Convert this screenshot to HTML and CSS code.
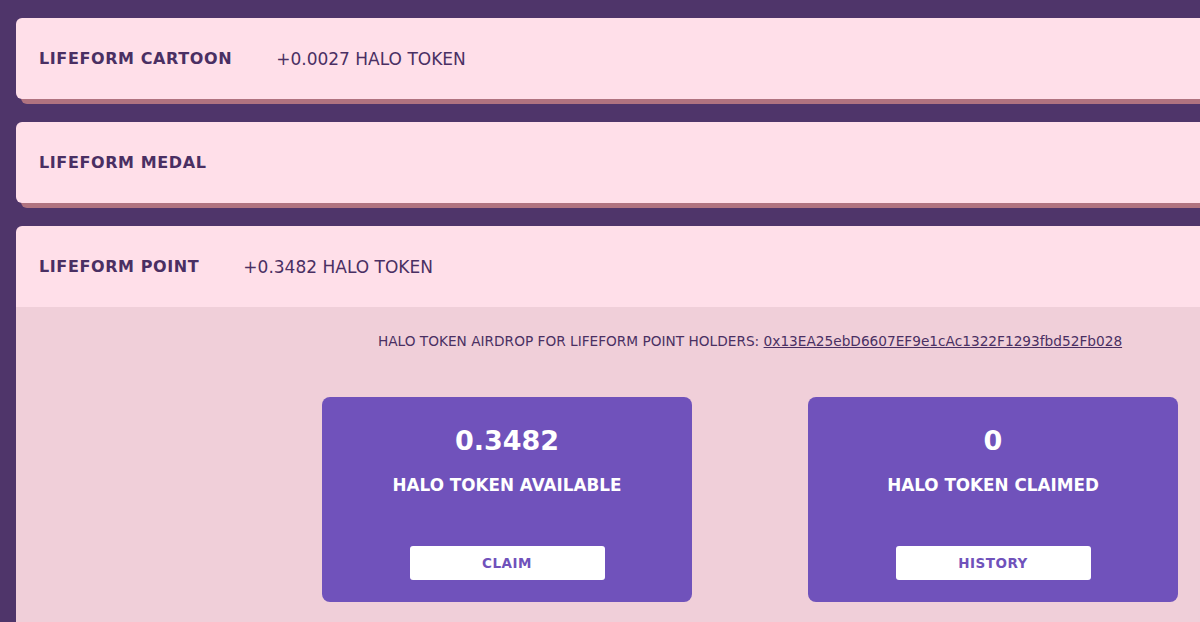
FILE: index.html
```html
<!DOCTYPE html>
<html lang="en">
<head>
    <meta charset="UTF-8">
    <meta name="viewport" content="width=device-width, initial-scale=1.0">
    <title>Lifeform Rewards</title>
    <link rel="stylesheet" href="styles.css">
</head>
<body>
    <div class="reward-list">
        <div class="reward-card">
            <div class="card-head">
                <span class="card-title">LIFEFORM CARTOON</span>
                <span class="card-amount">+0.0027 HALO TOKEN</span>
            </div>
        </div>

        <div class="reward-card">
            <div class="card-head">
                <span class="card-title">LIFEFORM MEDAL</span>
            </div>
        </div>

        <div class="reward-card open">
            <div class="card-head">
                <span class="card-title">LIFEFORM POINT</span>
                <span class="card-amount">+0.3482 HALO TOKEN</span>
            </div>
            <div class="card-body">
                <p class="airdrop">HALO TOKEN AIRDROP FOR LIFEFORM POINT HOLDERS: <a href="#">0x13EA25ebD6607EF9e1cAc1322F1293fbd52Fb028</a></p>
                <div class="stats">
                    <div class="stat-box">
                        <div class="stat-value">0.3482</div>
                        <div class="stat-label">HALO TOKEN AVAILABLE</div>
                        <button class="stat-btn">CLAIM</button>
                    </div>
                    <div class="stat-box">
                        <div class="stat-value">0</div>
                        <div class="stat-label">HALO TOKEN CLAIMED</div>
                        <button class="stat-btn">HISTORY</button>
                    </div>
                </div>
            </div>
        </div>
    </div>
</body>
</html>
```

FILE: styles.css
```css
body {
    font-family: "DejaVu Sans", Arial, sans-serif;
    margin: 0;
    padding: 0;
    background-color: #4f356a;
    color: #4a2f63;
    overflow: hidden;
}

.reward-list {
    display: flex;
    flex-direction: column;
    gap: 23px;
    padding: 18px 0 0 16px;
}

.reward-card {
    width: 1468px;
    background-color: #ffdfe9;
    border-radius: 6px;
    box-shadow: 5px 5px 0 #b07380;
    overflow: hidden;
}

.reward-card.open {
    box-shadow: none;
}

.card-head {
    display: flex;
    align-items: center;
    height: 81px;
    padding-left: 23px;
}

.card-title {
    font-size: 16px;
    font-weight: bold;
    letter-spacing: 0.6px;
}

.card-amount {
    margin-left: 44px;
    font-size: 17px;
}

.card-body {
    background-color: #f0cfd9;
    padding: 26px 0 40px;
}

.airdrop {
    margin: 0;
    font-size: 13.7px;
    text-align: center;
}

.airdrop a {
    color: #4a2f63;
}

.stats {
    display: flex;
    justify-content: center;
    gap: 116px;
    margin-top: 48px;
}

.stat-box {
    width: 370px;
    height: 205px;
    box-sizing: border-box;
    padding-top: 27px;
    background-color: #7052bb;
    border-radius: 8px;
    color: white;
    text-align: center;
}

.stat-value {
    font-size: 27px;
    font-weight: bold;
    line-height: 34px;
}

.stat-label {
    margin-top: 16px;
    font-size: 16.8px;
    font-weight: bold;
    line-height: 22px;
}

.stat-btn {
    display: block;
    width: 195px;
    height: 34px;
    margin: 50px auto 0;
    background-color: white;
    border: none;
    border-radius: 3px;
    color: #7052bb;
    font-family: inherit;
    font-size: 13.5px;
    font-weight: bold;
    letter-spacing: 0.5px;
}
```
